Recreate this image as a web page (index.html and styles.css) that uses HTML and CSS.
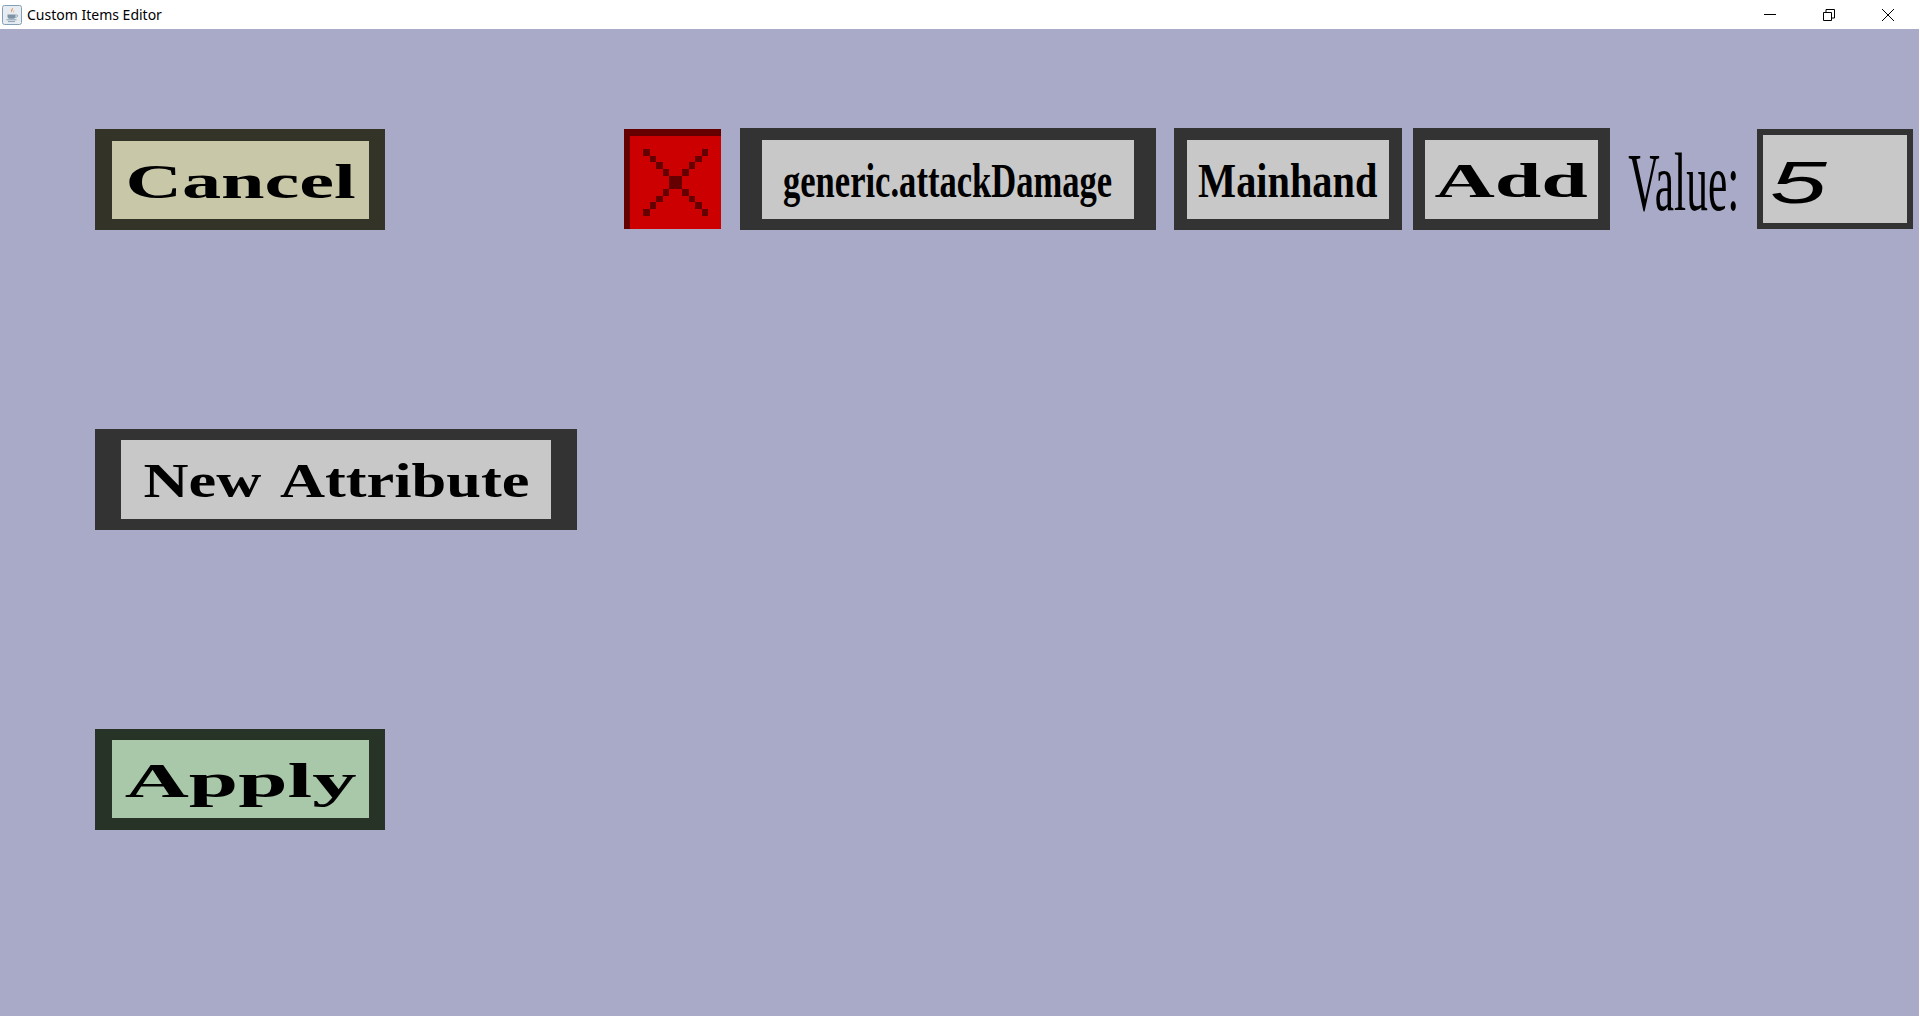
FILE: index.html
```html
<!DOCTYPE html>
<html lang="en">
<head>
  <meta charset="UTF-8">
  <meta name="viewport" content="width=device-width, initial-scale=1.0">
  <title>Custom Items Editor</title>
  <link rel="stylesheet" href="styles.css">
</head>
<body>
  <div class="title-bar">
    <svg class="app-icon" viewBox="0 0 20 20">
      <rect x="0.5" y="0.5" width="19" height="19" rx="2" fill="#e6ecf1" stroke="#84a0b6"/>
      <path d="M10.5 3c1.5 1.6-1.800 2.600-.6 4.600-2-1.400-.2-3 .6-4.600z" fill="#e8833a"/>
      <path d="M12.300 5.200c.5 1-1.300 1.500-.7 2.600-1.400-.8-.2-1.800.7-2.600z" fill="#e8a060"/>
      <path d="M5.500 9.500h8v2.200c0 1.300-1 2-2 2h-4c-1 0-2-.7-2-2z" fill="#7d93a6"/>
      <path d="M13.500 10h1.300c1.300 0 1.300 2.200-1.500 2.400" fill="none" stroke="#7d93a6" stroke-width=".8"/>
      <path d="M4.500 14.800h10M6 16.600h7" stroke="#8ea2b3" stroke-width="1"/>
    </svg>
    <span class="title-text">Custom Items Editor</span>
    <div class="window-controls">
      <div class="window-btn">
        <svg viewBox="0 0 12 12"><path d="M0 5.500h12" stroke="#000" fill="none"/></svg>
      </div>
      <div class="window-btn">
        <svg viewBox="0 0 12 12"><path d="M.5 3.500h8v8h-8zM3 3.500v-3h8.500v8.500h-3" stroke="#000" fill="none"/></svg>
      </div>
      <div class="window-btn">
        <svg viewBox="0 0 12 12"><path d="M0 0l12 12M12 0L0 12" stroke="#000" fill="none"/></svg>
      </div>
    </div>
  </div>

  <div class="content">
    <div class="row row-top">
      <div class="btn btn-cancel"><span class="label label-cancel">Cancel</span></div>

      <svg class="delete-btn" viewBox="0 0 291 300" shape-rendering="crispEdges">
        <rect width="291" height="300" fill="#660000"/>
        <rect x="18" y="21" width="273" height="279" fill="#cc0000"/>
        <path fill="#660000" d="M57 60h21v20h-21zM78 80h19v19h-19zM96 99h21v20h-21zM117 120h18v20h-18zM135 140h39v40h-39zM174 120h21v20h-21zM195 99h18v20h-18zM213 80h21v19h-21zM234 60h18v20h-18zM117 180h18v21h-18zM96 201h21v18h-21zM78 219h19v21h-19zM57 240h21v21h-21zM174 180h21v21h-21zM195 201h18v18h-18zM213 219h21v21h-21zM234 240h18v21h-18z"/>
      </svg>

      <div class="btn btn-attr"><span class="label label-attr">generic.attackDamage</span></div>
      <div class="btn btn-slot"><span class="label label-slot">Mainhand</span></div>
      <div class="btn btn-add"><span class="label label-add">Add</span></div>
      <div class="value-label"><span class="label label-value">Value:</span></div>
      <div class="value-field"><span class="label label-five">5</span></div>
    </div>

    <div class="row">
      <div class="btn btn-new"><span class="label label-new">New Attribute</span></div>
    </div>

    <div class="row">
      <div class="btn btn-apply"><span class="label label-apply">Apply</span></div>
    </div>
  </div>
</body>
</html>
```

FILE: styles.css
```css
html, body {
  height: 100%;
}

body {
  margin: 0;
  display: flex;
  flex-direction: column;
  background-color: #fff;
  font-family: "Liberation Serif", serif;
  overflow: hidden;
}

.title-bar {
  display: flex;
  align-items: center;
  height: 29px;
  padding: 0 3px 0 2px;
  box-sizing: border-box;
  background-color: #fff;
}

.app-icon {
  width: 20px;
  height: 20px;
  margin-right: 5px;
}

.title-text {
  font-family: "Noto Sans", sans-serif;
  font-size: 14px;
  color: #000;
}

.window-controls {
  display: flex;
  margin-left: auto;
}

.window-btn {
  display: flex;
  align-items: center;
  justify-content: center;
  width: 59px;
  height: 29px;
}

.window-btn svg {
  width: 12px;
  height: 12px;
}

.content {
  flex: 1;
  display: flex;
  flex-direction: column;
  gap: 199px;
  padding: 99px 0 0 95px;
  margin-right: 1px;
  background-color: #a9a9c8;
}

.row {
  display: flex;
}

.row-top {
  height: 102px;
}

.btn {
  display: flex;
  align-items: center;
  justify-content: center;
  box-sizing: border-box;
  height: 102px;
  border-style: solid;
  border-color: #333;
  background-color: #c8c8c8;
  border-width: 12px 22px 11px 22px;
}

.label {
  flex-shrink: 0;
  display: block;
  padding-top: 3px;
  font-size: 48px;
  line-height: 48px;
  font-weight: bold;
  white-space: nowrap;
  color: #000;
}

.btn-cancel {
  width: 290px;
  height: 101px;
  margin-top: 1px;
  margin-right: 239px;
  border-width: 12px 16px 11px 17px;
  border-color: #333328;
  background-color: #c8c8a9;
}

.delete-btn {
  width: 97px;
  height: 100px;
  margin-top: 1px;
  margin-right: 19px;
}

.btn-attr {
  width: 416px;
  margin-right: 18px;
}

.btn-slot {
  width: 228px;
  margin-right: 11px;
  border-width: 12px 13px 11px 13px;
}

.btn-add {
  width: 197px;
  margin-right: 19px;
  border-width: 12px 12px 11px 12px;
}

.btn-new {
  width: 482px;
  height: 101px;
  border-width: 11px 26px 11px 26px;
}

.btn-apply {
  width: 290px;
  height: 101px;
  border-width: 11px 16px 12px 17px;
  border-color: #283328;
  background-color: #a9c8a9;
}

.value-label {
  display: flex;
  align-items: center;
  justify-content: center;
  width: 109px;
  margin-right: 19px;
}

.value-field {
  display: flex;
  align-items: center;
  box-sizing: border-box;
  width: 156px;
  height: 100px;
  margin-top: 1px;
  padding-left: 7px;
  border: 6px solid #333;
  background-color: #c8c8c8;
}

.label-cancel { transform: scaleX(1.63); }
.label-attr { transform: scaleX(0.72); }
.label-slot { transform: scaleX(0.84); }
.label-add { transform: scaleX(1.74); }
.label-new { transform: scaleX(1.3); word-spacing: 5px; }
.label-apply { transform: scaleX(1.85); }

.label-value {
  padding-top: 7px;
  font-size: 82px;
  line-height: 82px;
  font-weight: normal;
  transform: scaleX(0.53);
}

.label-five {
  padding-top: 7px;
  font-family: "Liberation Sans", sans-serif;
  font-size: 60px;
  line-height: 60px;
  font-weight: normal;
  font-style: italic;
  transform: scaleX(1.7);
  transform-origin: left center;
}
```
